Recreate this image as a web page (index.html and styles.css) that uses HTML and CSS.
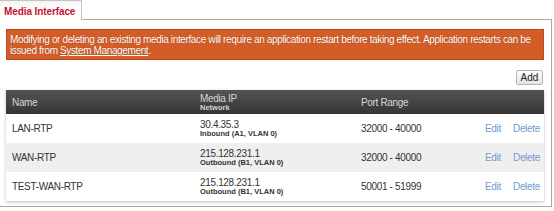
FILE: index.html
```html
<!DOCTYPE html>
<html lang="en">
<head>
  <meta charset="UTF-8" />
  <title>Media Interface</title>
  <link rel="stylesheet" href="styles.css">
</head>
<body>
  <div class="tabs">
    <div class="tab">Media Interface</div>
  </div>

  <div class="panel">
    <div class="alert">
      <p>Modifying or deleting an existing media interface will require an application restart before taking effect. Application restarts can be</p>
      <p>issued from <a href="#">System Management</a>.</p>
    </div>

    <div class="actions">
      <button class="btn">Add</button>
    </div>

    <table class="grid">
      <colgroup>
        <col class="c-name">
        <col class="c-ip">
        <col class="c-port">
        <col class="c-edit">
        <col>
      </colgroup>
      <thead>
        <tr>
          <th>Name</th>
          <th>Media IP<span class="sub">Network</span></th>
          <th>Port Range</th>
          <th></th>
          <th></th>
        </tr>
      </thead>
      <tbody>
        <tr>
          <td>LAN-RTP</td>
          <td>30.4.35.3<span class="sub">Inbound (A1, VLAN 0)</span></td>
          <td>32000 - 40000</td>
          <td><a href="#">Edit</a></td>
          <td><a href="#">Delete</a></td>
        </tr>
        <tr class="alt">
          <td>WAN-RTP</td>
          <td>215.128.231.1<span class="sub">Outbound (B1, VLAN 0)</span></td>
          <td>32000 - 40000</td>
          <td><a href="#">Edit</a></td>
          <td><a href="#">Delete</a></td>
        </tr>
        <tr>
          <td>TEST-WAN-RTP</td>
          <td>215.128.231.1<span class="sub">Outbound (B1, VLAN 0)</span></td>
          <td>50001 - 51999</td>
          <td><a href="#">Edit</a></td>
          <td><a href="#">Delete</a></td>
        </tr>
      </tbody>
    </table>
  </div>
</body>
</html>
```

FILE: styles.css
```css
* {
  margin: 0;
  padding: 0;
  box-sizing: border-box;
}

body {
  margin: 0;
  width: 554px;
  font-family: "Liberation Sans", Arial, sans-serif;
  color: #333;
  background: #fff;
}

.tabs {
  display: flex;
  height: 20px;
}

.tab {
  width: 82px;
  height: 20px;
  border: 1px solid #c4c4c4;
  border-left: none;
  border-bottom: none;
  background: linear-gradient(#f4f4f4, #fff 40%);
  color: #c8102e;
  font-weight: bold;
  font-size: 10px;
  letter-spacing: -0.1px;
  padding: 5px 0 0 4px;
  position: relative;
  z-index: 1;
}

.panel {
  width: 552px;
  height: 188px;
  margin-top: -1px;
  border: 1px solid #a8a8a8;
  border-left: none;
  padding: 9px 7px 0 6px;
}

.alert {
  height: 31px;
  background: #d45d27;
  border: 1px solid #b84a1c;
  color: #fff;
  text-shadow: 0 0 1px #8a3510;
  font-size: 10px;
  letter-spacing: -0.37px;
  line-height: 11.5px;
  padding: 3.5px 3px;
}

.alert p {
  white-space: nowrap;
}

.alert a {
  color: #fff;
  margin-right: 0.5px;
}

.actions {
  display: flex;
  justify-content: flex-end;
  height: 30px;
  padding: 10px 1px 0 0;
}

.btn {
  display: block;
  width: 27px;
  height: 15px;
  font-family: inherit;
  font-size: 10px;
  color: #222;
  border: 1px solid #b5b5b5;
  border-radius: 2px;
  background: linear-gradient(#fdfdfd, #e4e4e4);
}

.grid {
  width: 538px;
  border-collapse: collapse;
  table-layout: fixed;
  box-shadow: 0 1px 3px rgba(0, 0, 0, 0.25);
  font-size: 10px;
  letter-spacing: -0.33px;
}

.c-name { width: 188px; }
.c-ip { width: 161px; }
.c-port { width: 124px; }
.c-edit { width: 28px; }

.grid th {
  height: 24px;
  background: linear-gradient(#545454, #353535);
  color: #d6d6d6;
  font-weight: normal;
  text-align: left;
  padding-left: 6px;
  line-height: 11px;
}

.grid td {
  height: 29px;
  padding-left: 6px;
  line-height: 10px;
}

.grid tr.alt td {
  background: #efefef;
}

.sub {
  display: block;
  font-size: 7.5px;
  font-weight: bold;
  letter-spacing: 0;
  line-height: 8px;
}

.grid a {
  color: #6f9cce;
  text-decoration: none;
}
```
